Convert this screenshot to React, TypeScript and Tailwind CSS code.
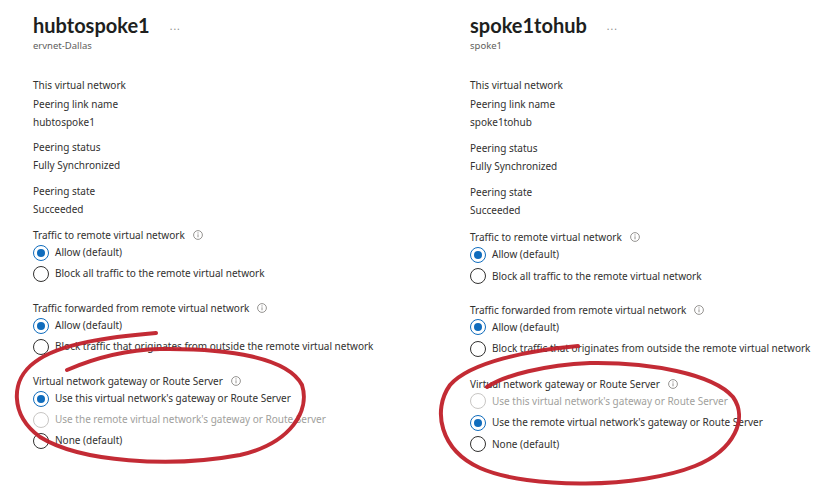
import React from 'react';

type Option = { label: string; checked?: boolean; disabled?: boolean };
type Group = { title: string; options: Option[] };

const font = { fontFamily: '"Noto Sans", "Open Sans", Arial, sans-serif' };
const titleFont = { fontFamily: 'Lato, "Noto Sans", Arial, sans-serif' };

const InfoIcon: React.FC = () => (
  <svg width="10" height="10" viewBox="0 0 10 10" className="ml-[8px] shrink-0">
    <circle cx="5" cy="5" r="4.4" fill="none" stroke="#8a8886" strokeWidth="0.9" />
    <line x1="5" y1="4.3" x2="5" y2="7.3" stroke="#8a8886" strokeWidth="0.9" />
    <circle cx="5" cy="2.9" r="0.55" fill="#8a8886" />
  </svg>
);

const Radio: React.FC<Option & { tall?: boolean }> = ({ label, checked, disabled, tall }) => (
  <div className={`flex items-center ${tall ? 'h-[21.5px]' : 'h-[21px]'}`}>
    <span
      className={`flex h-[16px] w-[16px] shrink-0 items-center justify-center rounded-full border ${
        checked ? 'border-[#0f6cbd]' : disabled ? 'border-[#c8c6c4]' : 'border-[#323130]'
      }`}
    >
      {checked && <span className="h-[8px] w-[8px] rounded-full bg-[#0f6cbd]" />}
    </span>
    <span className={`ml-[6px] whitespace-nowrap ${disabled ? 'text-[#a19f9d]' : 'text-[#323130]'}`}>{label}</span>
  </div>
);

const Column: React.FC<{ name: string; sub: string; link: string; groups: Group[]; tall?: boolean }> = ({
  name,
  sub,
  link,
  groups,
  tall,
}) => {
  const gaps = tall ? ['mt-[11px]', 'mt-[15.5px]', 'mt-[17px]'] : ['mt-[10px]', 'mt-[17px]', 'mt-[17px]'];
  return (
    <div className="flex flex-col text-[10px] text-[#323130]">
      <div className="flex items-center h-[24px]">
        <h1 className="text-[20px] font-bold leading-[24px] text-[#201f1e]" style={titleFont}>
          {name}
        </h1>
        <span className="ml-[20px] mt-[3px] text-[10px] tracking-[1px] text-[#8a8886]">...</span>
      </div>
      <div className="mt-[2px] text-[9.5px] leading-[14px] text-[#605e5c]">{sub}</div>

      <div className="mt-[23px] leading-[18.5px]">This virtual network</div>
      <div className="leading-[18.5px]">Peering link name</div>
      <div className="leading-[18.5px]">{link}</div>

      <div className={`${tall ? 'mt-[7.5px]' : 'mt-[6.5px]'} leading-[18px]`}>Peering status</div>
      <div className="leading-[18px]">Fully Synchronized</div>

      <div className="mt-[8px] leading-[18px]">Peering state</div>
      <div className="leading-[18px]">Succeeded</div>

      {groups.map((g, i) => (
        <div key={g.title} className={gaps[i]}>
          <div className="flex items-center h-[14px] leading-[14px]">
            <span>{g.title}</span>
            <InfoIcon />
          </div>
          {g.options.map((o) => (
            <Radio key={o.label} {...o} tall={tall} />
          ))}
        </div>
      ))}
    </div>
  );
};

const trafficGroups = (gateway: Option[]): Group[] => [
  {
    title: 'Traffic to remote virtual network',
    options: [{ label: 'Allow (default)', checked: true }, { label: 'Block all traffic to the remote virtual network' }],
  },
  {
    title: 'Traffic forwarded from remote virtual network',
    options: [
      { label: 'Allow (default)', checked: true },
      { label: 'Block traffic that originates from outside the remote virtual network' },
    ],
  },
  { title: 'Virtual network gateway or Route Server', options: gateway },
];

const App: React.FC = () => {
  return (
    <div className="relative h-[497px] w-[821px] overflow-hidden bg-white" style={font}>
      <div className="grid grid-cols-[437px_1fr] pl-[33px] pt-[13px]">
        <Column
          name="hubtospoke1"
          sub="ervnet-Dallas"
          link="hubtospoke1"
          groups={trafficGroups([
            { label: "Use this virtual network's gateway or Route Server", checked: true },
            { label: "Use the remote virtual network's gateway or Route Server", disabled: true },
            { label: 'None (default)' },
          ])}
        />
        <Column
          name="spoke1tohub"
          sub="spoke1"
          link="spoke1tohub"
          tall
          groups={trafficGroups([
            { label: "Use this virtual network's gateway or Route Server", disabled: true },
            { label: "Use the remote virtual network's gateway or Route Server", checked: true },
            { label: 'None (default)' },
          ])}
        />
      </div>

      {/* hand-drawn red highlight marks */}
      <svg className="pointer-events-none absolute inset-0" width="821" height="497" viewBox="0 0 821 497">
        <g fill="none" stroke="#c0202a" strokeWidth="4" strokeLinecap="round" strokeLinejoin="round" opacity="0.95">
          <path d="M 156 333 C 110 337, 60 343, 35 362 C 10 380, 10 415, 40 437 C 80 462, 170 468, 240 455 C 292 443, 310 410, 302 385 C 288 358, 230 348, 160 349 C 120 350, 90 360, 67 370" />
          <path d="M 578 346 C 530 350, 470 362, 450 385 C 432 410, 440 450, 480 468 C 530 490, 640 488, 695 466 C 735 450, 748 418, 733 397 C 713 374, 650 362, 590 363 C 545 365, 505 375, 487 387" />
        </g>
      </svg>
    </div>
  );
};

export default App;
